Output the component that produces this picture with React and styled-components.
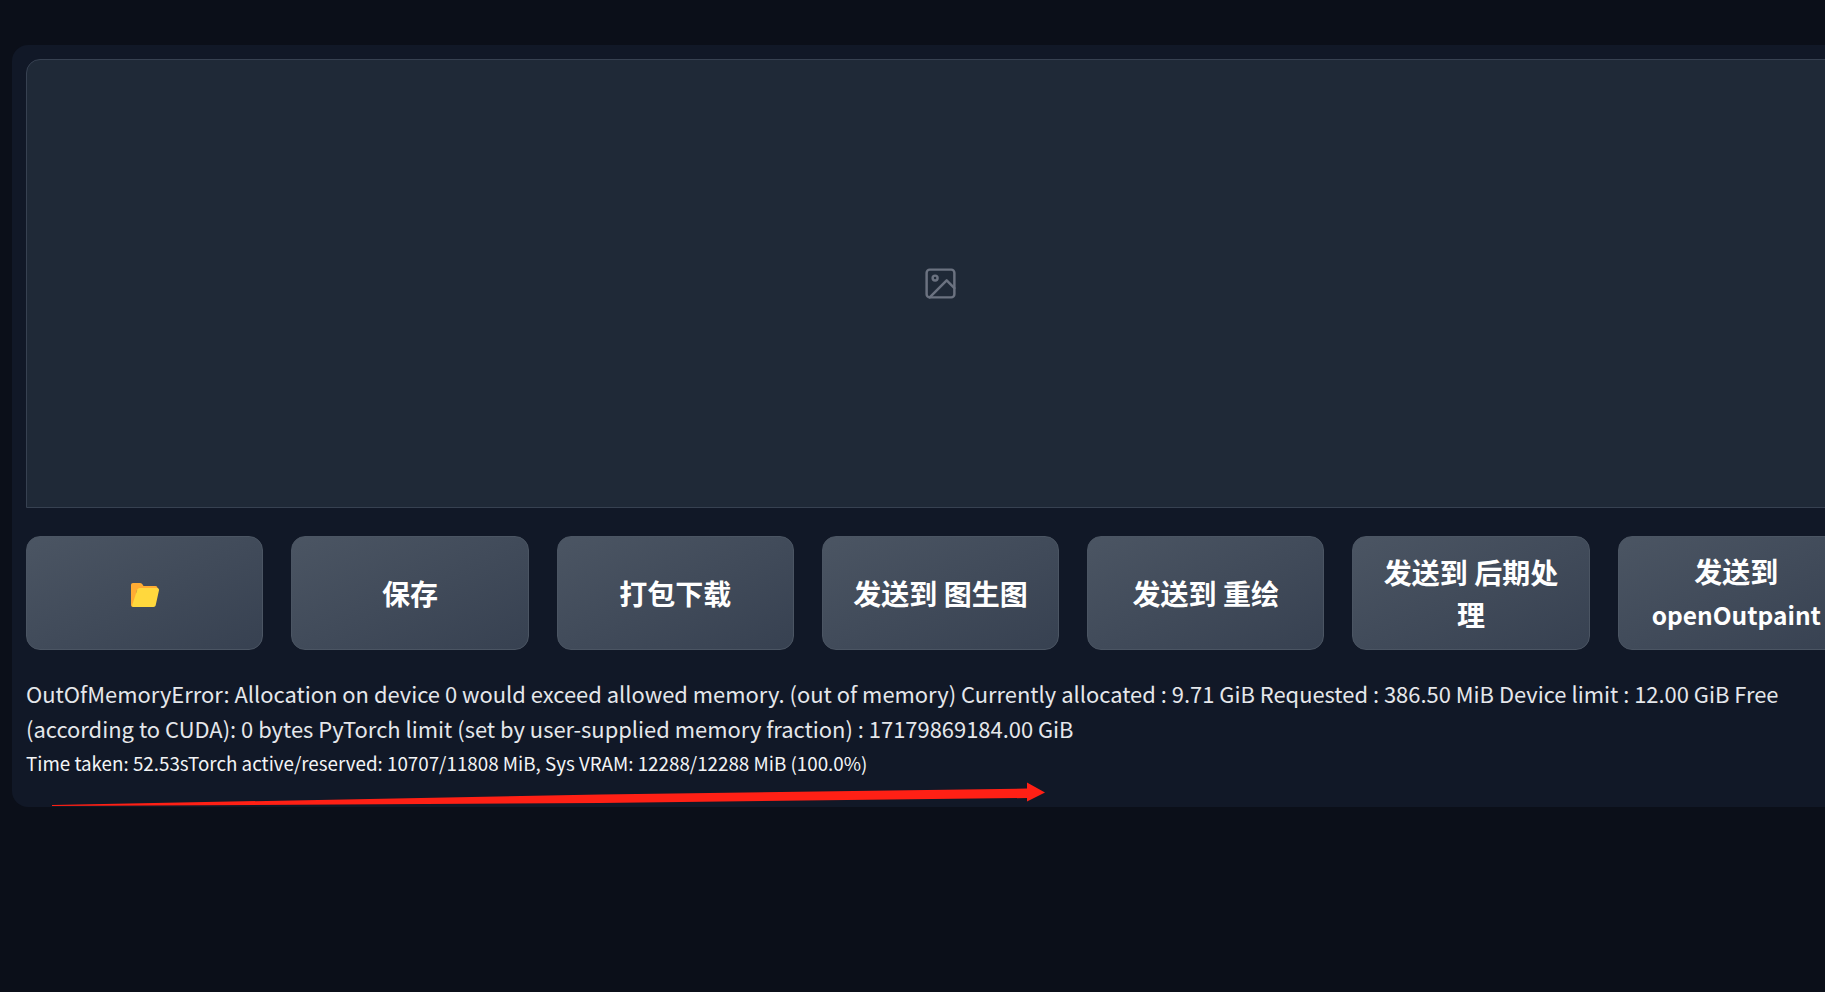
import React from 'react'
import styled, { createGlobalStyle } from 'styled-components'

const GlobalStyle = createGlobalStyle`
  html, body {
    margin: 0;
    height: 100%;
    overflow: hidden;
    background: #0b0f19;
  }
`

const Page = styled.div`
  width: 1825px;
  height: 992px;
  overflow: hidden;
  padding: 45px 0 0 12px;
  box-sizing: border-box;
  font-family: "Noto Sans CJK SC", "Noto Sans", sans-serif;
`

const Panel = styled.div`
  position: relative;
  width: 1857px;
  height: 762px;
  box-sizing: border-box;
  padding: 14px;
  background: #111827;
  border-radius: 16px;
`

const ImageBox = styled.div`
  height: 449px;
  box-sizing: border-box;
  display: flex;
  align-items: center;
  justify-content: center;
  background: #1f2937;
  border: 1px solid #374151;
  border-radius: 14px 14px 0 0;
  color: #6b7280;
`

const ButtonRow = styled.div`
  display: flex;
  gap: 28px;
  margin-top: 28px;
`

const ActionButton = styled.button`
  flex: 1 1 0;
  min-width: 0;
  height: 114px;
  box-sizing: border-box;
  padding: 0 20px 1px;
  display: flex;
  align-items: center;
  justify-content: center;
  text-align: center;
  background: linear-gradient(to bottom right, #4b5563, #374151);
  border: 1px solid #4b5563;
  border-radius: 14px;
  color: #fff;
  font-family: inherit;
  font-size: 28px;
  font-weight: 700;
  line-height: 42px;
`

const ButtonLabel = styled.span`
  display: block;
`

const Latin = styled.span`
  font-size: 24.5px;
  font-weight: 600;
`

const Info = styled.div`
  margin-top: 26px;
  width: 1760px;
  color: #e5e7eb;
`

const ErrorText = styled.div`
  font-size: 21.93px;
  line-height: 35px;
`

const TimeText = styled.div`
  font-size: 18.8px;
  line-height: 34px;
  color: #f3f4f6;
`

const Arrow = styled.svg`
  position: absolute;
  left: 40px;
  top: 737px;
`

const ImageIcon = () => (
  <svg width="37" height="37" viewBox="0 0 24 24" fill="none" stroke="currentColor" strokeWidth="1.6" strokeLinecap="round" strokeLinejoin="round">
    <rect x="3" y="3" width="18" height="18" rx="2" />
    <circle cx="8.5" cy="8.5" r="1.6" />
    <polyline points="21 15 16 10 5 21" />
  </svg>
)

const FolderIcon = () => (
  <svg width="28" height="24" viewBox="0 0 28 24" style={{ marginTop: 5 }}>
    <path d="M2 0h7c1.5 0 2.5 1 3.5 3h12c1.2 0 2 .8 2 2v2H6L3 24H2c-1.2 0-2-.8-2-2V2C0 .8.8 0 2 0z" fill="#ffac33" />
    <path d="M6 7.500c.3-1.500 1.200-2.500 3-2.500h17c1.400 0 2.200 1 2 2.300l-3.300 15c-.3 1.100-1 1.700-2.200 1.700H3c-1.400 0-2-.9-1.800-2z" fill="#ffd83d" />
  </svg>
)

const App = () => (
  <>
    <GlobalStyle />
    <Page>
      <Panel>
        <ImageBox>
          <ImageIcon />
        </ImageBox>
        <ButtonRow>
          <ActionButton><FolderIcon /></ActionButton>
          <ActionButton>保存</ActionButton>
          <ActionButton>打包下载</ActionButton>
          <ActionButton>发送到 图生图</ActionButton>
          <ActionButton>发送到 重绘</ActionButton>
          <ActionButton>发送到 后期处理</ActionButton>
          <ActionButton>
            <ButtonLabel>发送到 <Latin>openOutpaint</Latin></ButtonLabel>
          </ActionButton>
        </ButtonRow>
        <Info>
          <ErrorText>
            OutOfMemoryError: Allocation on device 0 would exceed allowed memory. (out of memory) Currently allocated : 9.71 GiB Requested : 386.50 MiB Device limit : 12.00 GiB Free (according to CUDA): 0 bytes PyTorch limit (set by user-supplied memory fraction) : 17179869184.00 GiB
          </ErrorText>
          <TimeText>Time taken: 52.53sTorch active/reserved: 10707/11808 MiB, Sys VRAM: 12288/12288 MiB (100.0%)</TimeText>
        </Info>
        <Arrow width="996" height="26" viewBox="0 0 996 26">
          <polygon points="0,23 548,12.500 975,6.500 975,0.500 993,10.500 975,19.500 975,16 548,21 0,24" fill="#ff2015" />
        </Arrow>
      </Panel>
    </Page>
  </>
)

export default App
